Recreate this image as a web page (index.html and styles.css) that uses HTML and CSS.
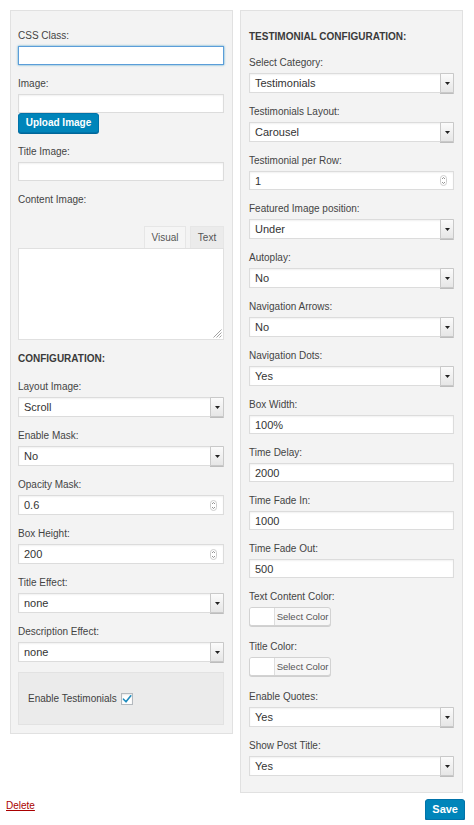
FILE: index.html
```html
<!DOCTYPE html>
<html lang="en">
<head>
<meta charset="utf-8">
<title>Testimonials widget</title>
<link rel="stylesheet" href="styles.css">
</head>
<body>
<div class="page">
  <div class="columns">
    <section class="panel panel-left">
      <div class="field">
        <span class="lbl">CSS Class:</span>
        <div class="ctl text focus"></div>
      </div>
      <div class="field">
        <span class="lbl">Image:</span>
        <div class="ctl text"></div>
        <button class="btn-primary upload">Upload Image</button>
      </div>
      <div class="field">
        <span class="lbl">Title Image:</span>
        <div class="ctl text"></div>
      </div>
      <div class="field">
        <span class="lbl">Content Image:</span>
        <div class="editor">
          <div class="tabs">
            <span class="tab tab-active">Visual</span>
            <span class="tab">Text</span>
          </div>
          <div class="textarea">
            <svg class="resize" width="10" height="10" viewBox="0 0 10 10"><path d="M9.5 1.5 L1.5 9.5 M9.5 4.5 L4.5 9.5 M9.5 7.5 L7.5 9.5" stroke="#999" stroke-width="0.9"/></svg>
          </div>
        </div>
      </div>
      <h3 class="heading">CONFIGURATION:</h3>
      <div class="field">
        <span class="lbl">Layout Image:</span>
        <div class="ctl select"><span class="val">Scroll</span><span class="arrow"><svg width="5" height="3" viewBox="0 0 5 3"><path d="M0 0H5L2.5 3Z" fill="#222"/></svg></span></div>
      </div>
      <div class="field">
        <span class="lbl">Enable Mask:</span>
        <div class="ctl select"><span class="val">No</span><span class="arrow"><svg width="5" height="3" viewBox="0 0 5 3"><path d="M0 0H5L2.5 3Z" fill="#222"/></svg></span></div>
      </div>
      <div class="field">
        <span class="lbl">Opacity Mask:</span>
        <div class="ctl number"><span class="val">0.6</span><svg class="spin" width="7" height="11" viewBox="0 0 7 11"><rect x="0.5" y="0.5" width="6" height="10" rx="3" fill="none" stroke="#ccc"/><path d="M2 4 L3.5 2.5 L5 4 M2 7 L3.5 8.5 L5 7" fill="none" stroke="#777" stroke-width="0.8"/></svg></div>
      </div>
      <div class="field">
        <span class="lbl">Box Height:</span>
        <div class="ctl number"><span class="val">200</span><svg class="spin" width="7" height="11" viewBox="0 0 7 11"><rect x="0.5" y="0.5" width="6" height="10" rx="3" fill="none" stroke="#ccc"/><path d="M2 4 L3.5 2.5 L5 4 M2 7 L3.5 8.5 L5 7" fill="none" stroke="#777" stroke-width="0.8"/></svg></div>
      </div>
      <div class="field">
        <span class="lbl">Title Effect:</span>
        <div class="ctl select"><span class="val">none</span><span class="arrow"><svg width="5" height="3" viewBox="0 0 5 3"><path d="M0 0H5L2.5 3Z" fill="#222"/></svg></span></div>
      </div>
      <div class="field">
        <span class="lbl">Description Effect:</span>
        <div class="ctl select"><span class="val">none</span><span class="arrow"><svg width="5" height="3" viewBox="0 0 5 3"><path d="M0 0H5L2.5 3Z" fill="#222"/></svg></span></div>
      </div>
      <div class="toggle-box">
        <span class="toggle-label">Enable Testimonials</span>
        <span class="checkbox"><svg width="10" height="10" viewBox="0 0 10 10"><path d="M1.5 5.2 L4 7.8 L8.8 1.8" fill="none" stroke="#1e8cbe" stroke-width="1.6" stroke-linecap="round" stroke-linejoin="round"/></svg></span>
      </div>
    </section>

    <section class="panel panel-right">
      <h3 class="heading heading-top">TESTIMONIAL CONFIGURATION:</h3>
      <div class="field">
        <span class="lbl">Select Category:</span>
        <div class="ctl select"><span class="val">Testimonials</span><span class="arrow"><svg width="5" height="3" viewBox="0 0 5 3"><path d="M0 0H5L2.5 3Z" fill="#222"/></svg></span></div>
      </div>
      <div class="field">
        <span class="lbl">Testimonials Layout:</span>
        <div class="ctl select"><span class="val">Carousel</span><span class="arrow"><svg width="5" height="3" viewBox="0 0 5 3"><path d="M0 0H5L2.5 3Z" fill="#222"/></svg></span></div>
      </div>
      <div class="field">
        <span class="lbl">Testimonial per Row:</span>
        <div class="ctl number short"><span class="val">1</span><svg class="spin" width="7" height="11" viewBox="0 0 7 11"><rect x="0.5" y="0.5" width="6" height="10" rx="3" fill="none" stroke="#ccc"/><path d="M2 4 L3.5 2.5 L5 4 M2 7 L3.5 8.5 L5 7" fill="none" stroke="#777" stroke-width="0.8"/></svg></div>
      </div>
      <div class="field">
        <span class="lbl">Featured Image position:</span>
        <div class="ctl select"><span class="val">Under</span><span class="arrow"><svg width="5" height="3" viewBox="0 0 5 3"><path d="M0 0H5L2.5 3Z" fill="#222"/></svg></span></div>
      </div>
      <div class="field">
        <span class="lbl">Autoplay:</span>
        <div class="ctl select"><span class="val">No</span><span class="arrow"><svg width="5" height="3" viewBox="0 0 5 3"><path d="M0 0H5L2.5 3Z" fill="#222"/></svg></span></div>
      </div>
      <div class="field">
        <span class="lbl">Navigation Arrows:</span>
        <div class="ctl select"><span class="val">No</span><span class="arrow"><svg width="5" height="3" viewBox="0 0 5 3"><path d="M0 0H5L2.5 3Z" fill="#222"/></svg></span></div>
      </div>
      <div class="field">
        <span class="lbl">Navigation Dots:</span>
        <div class="ctl select"><span class="val">Yes</span><span class="arrow"><svg width="5" height="3" viewBox="0 0 5 3"><path d="M0 0H5L2.5 3Z" fill="#222"/></svg></span></div>
      </div>
      <div class="field">
        <span class="lbl">Box Width:</span>
        <div class="ctl text"><span class="val">100%</span></div>
      </div>
      <div class="field">
        <span class="lbl">Time Delay:</span>
        <div class="ctl text"><span class="val">2000</span></div>
      </div>
      <div class="field">
        <span class="lbl">Time Fade In:</span>
        <div class="ctl text"><span class="val">1000</span></div>
      </div>
      <div class="field">
        <span class="lbl">Time Fade Out:</span>
        <div class="ctl text"><span class="val">500</span></div>
      </div>
      <div class="field field-color">
        <span class="lbl">Text Content Color:</span>
        <button class="color-btn"><span class="swatch"></span><span class="color-txt">Select Color</span></button>
      </div>
      <div class="field field-color">
        <span class="lbl">Title Color:</span>
        <button class="color-btn"><span class="swatch"></span><span class="color-txt">Select Color</span></button>
      </div>
      <div class="field">
        <span class="lbl">Enable Quotes:</span>
        <div class="ctl select"><span class="val">Yes</span><span class="arrow"><svg width="5" height="3" viewBox="0 0 5 3"><path d="M0 0H5L2.5 3Z" fill="#222"/></svg></span></div>
      </div>
      <div class="field field-last">
        <span class="lbl">Show Post Title:</span>
        <div class="ctl select"><span class="val">Yes</span><span class="arrow"><svg width="5" height="3" viewBox="0 0 5 3"><path d="M0 0H5L2.5 3Z" fill="#222"/></svg></span></div>
      </div>
    </section>
  </div>

  <div class="footer">
    <a class="delete" href="#">Delete</a>
    <button class="btn-primary save">Save</button>
  </div>
</div>
</body>
</html>
```

FILE: styles.css
```css
html, body {
  margin: 0;
  padding: 0;
  background: #fff;
}

body {
  font-family: "Liberation Sans", Arial, sans-serif;
  color: #444;
}

.page {
  width: 474px;
  padding-top: 10px;
}

.columns {
  display: grid;
  grid-template-columns: 223px 223px;
  column-gap: 7px;
  padding-left: 10px;
  align-items: start;
}

.panel {
  background: #f3f3f3;
  border: 1px solid #e1e1e1;
  box-sizing: border-box;
  display: flex;
  flex-direction: column;
}

.panel-left {
  padding: 18px 8px 8px 7px;
}

.panel-right {
  padding: 19px 8px 16px 8px;
}

.heading {
  margin: 0 0 14px 0;
  font-size: 10px;
  line-height: 14px;
  font-weight: bold;
  color: #3a3a3a;
}

.heading-top {
  margin-bottom: 12px;
}

.field {
  display: flex;
  flex-direction: column;
  margin-bottom: 12px;
}

.field-color {
  margin-bottom: 14px;
  align-items: flex-start;
}

.field-last {
  margin-bottom: 0;
}

.lbl {
  display: block;
  font-size: 10px;
  line-height: 14px;
  margin-bottom: 3px;
  color: #444;
}

.ctl {
  box-sizing: border-box;
  border: 1px solid #dcdcdc;
  background: #fff;
  box-shadow: inset 0 1px 2px rgba(0, 0, 0, 0.06);
  display: flex;
  align-items: center;
  font-size: 11px;
  color: #333;
  padding-left: 5px;
}

.text {
  height: 19px;
}

.number {
  height: 20px;
  justify-content: space-between;
  padding-right: 6px;
}

.number.short {
  height: 19px;
}

.select {
  height: 20px;
  justify-content: space-between;
  padding-right: 0;
}

.focus {
  border-color: #5b9dd9;
  box-shadow: 0 0 2px rgba(30, 140, 190, 0.8);
}

.val {
  line-height: 14px;
}

.arrow {
  width: 12px;
  align-self: stretch;
  margin: -1px -1px -1px 0;
  border: 1px solid #c9c9c9;
  border-radius: 0 1px 1px 0;
  background: linear-gradient(#fbfbfb, #e6e6e6);
  box-shadow: 0 1px 0 #bdbdbd;
  display: flex;
  align-items: center;
  justify-content: center;
}

.spin {
  display: block;
}

.btn-primary {
  font-family: "Liberation Sans", Arial, sans-serif;
  background: #0085ba;
  border: 1px solid #0073aa;
  border-radius: 3px;
  box-shadow: 0 1px 0 #006799;
  color: #fff;
  font-weight: bold;
  cursor: pointer;
  padding: 0;
}

.upload {
  align-self: flex-start;
  width: 81px;
  height: 20px;
  font-size: 10px;
  line-height: 18px;
}

.editor {
  margin-top: 16px;
  display: flex;
  flex-direction: column;
}

.tabs {
  display: flex;
  justify-content: flex-end;
  gap: 4px;
  height: 22px;
}

.tab {
  box-sizing: border-box;
  width: 34px;
  height: 22px;
  background: #ebebeb;
  border: 1px solid #e6e6e6;
  border-bottom: none;
  font-size: 10px;
  line-height: 21px;
  text-align: center;
  color: #555;
}

.tab-active {
  width: 42px;
  background: #f5f5f5;
}

.textarea {
  box-sizing: border-box;
  height: 92px;
  background: #fff;
  border: 1px solid #e0e0e0;
  display: flex;
  justify-content: flex-end;
  align-items: flex-end;
  padding: 0 1px 1px 0;
}

.resize {
  display: block;
}

.toggle-box {
  margin-top: -2px;
  box-sizing: border-box;
  height: 53px;
  background: #ebebeb;
  border: 1px solid #e2e2e2;
  display: flex;
  align-items: center;
  padding-left: 9px;
  gap: 4px;
}

.toggle-label {
  font-size: 10px;
  line-height: 14px;
  color: #3f3f3f;
}

.checkbox {
  box-sizing: border-box;
  width: 12px;
  height: 12px;
  background: #fff;
  border: 1px solid #b4b9be;
  box-shadow: inset 0 1px 2px rgba(0, 0, 0, 0.1);
  display: flex;
  align-items: center;
  justify-content: center;
}

.color-btn {
  box-sizing: border-box;
  width: 82px;
  height: 19px;
  padding: 0;
  border: 1px solid #d2d2d2;
  border-radius: 3px;
  background: #f7f7f7;
  box-shadow: 0 1px 0 #cfcfcf;
  display: flex;
  align-items: stretch;
  overflow: hidden;
  font-family: "Liberation Sans", Arial, sans-serif;
}

.swatch {
  width: 24px;
  background: #fff;
  border-right: 1px solid #dedede;
}

.color-txt {
  flex: 1;
  font-size: 9.5px;
  line-height: 17px;
  color: #555;
  text-align: center;
}

.footer {
  display: flex;
  justify-content: space-between;
  align-items: flex-start;
  padding: 6px 9px 0 6px;
}

.delete {
  font-size: 10px;
  line-height: 14px;
  color: #a00;
  text-decoration: underline;
}

.save {
  height: 21px;
  padding: 0 6px;
  font-size: 11px;
  line-height: 19px;
}
```
